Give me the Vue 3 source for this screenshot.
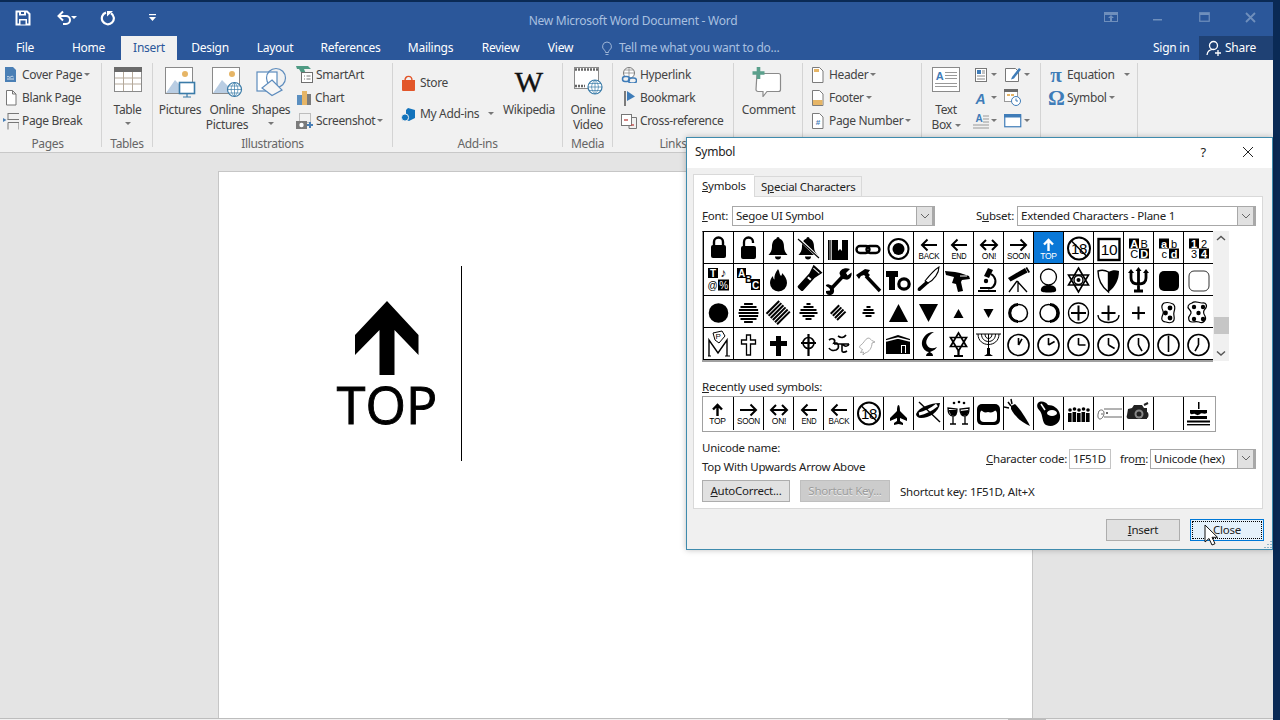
<script setup>
import { h } from 'vue'

const B = '#4a7fb5', G = '#7b7b7b', O = '#e6b566'
const ICONS = {
  save: `<path d="M1.5 1.5h10.5l2.5 2.5v10.5h-13z" fill="none" stroke="#fff" stroke-width="2"/><rect x="4" y="1" width="7" height="4.5" fill="#fff"/><rect x="6" y="2" width="3" height="2" fill="#2b579a"/><rect x="4" y="9" width="8" height="5.5" fill="#fff"/><rect x="5.5" y="10.5" width="5" height="4" fill="#2b579a"/>`,
  undo: `<path d="M3 6h7a4 4 0 0 1 0 8H7" fill="none" stroke="#fff" stroke-width="2"/><path d="M7 1.5L2.5 6 7 10.5" fill="none" stroke="#fff" stroke-width="2"/>`,
  redo: `<path d="M6 2.6a6 6 0 1 0 5 .6" fill="none" stroke="#fff" stroke-width="2.2"/><path d="M13 1H7v5.5z" fill="#fff"/>`,
  custom: `<rect x="1" y="1" width="7" height="1.2" fill="#fff"/><path d="M1 4h7L4.5 8z" fill="#fff"/>`,
  ribbonDisp: `<rect x=".5" y=".5" width="13" height="9" fill="none" stroke="#6f8fbc"/><rect x="1" y="1" width="12" height="2" fill="#6f8fbc"/><path d="M7 3l3 3H8v3H6V6H4z" fill="#6f8fbc"/>`,
  min: `<rect x="1" y="7" width="9" height="1.5" fill="#6f8fbc"/>`,
  max: `<rect x=".75" y=".75" width="9.5" height="8.5" fill="none" stroke="#6f8fbc" stroke-width="1.2"/><rect x="1" y="1" width="9" height="2" fill="#6f8fbc"/>`,
  close: `<path d="M1 1l9 9M10 1l-9 9" stroke="#6f8fbc" stroke-width="1.8"/>`,
  bulb: `<path d="M6 1a4.5 4.5 0 0 0-2.5 8.2c.8.6 1 1.3 1 2.3h3c0-1 .2-1.7 1-2.3A4.5 4.5 0 0 0 6 1zM4.5 13.5h3" fill="none" stroke="#9db5d7"/>`,
  share: `<circle cx="7.5" cy="5.5" r="4" fill="none" stroke="#fff" stroke-width="1.3"/><path d="M1 15c.5-4 3-5.6 6.5-5.6M12 10v6M9 13h6" fill="none" stroke="#fff" stroke-width="1.3"/>`,
  cover: `<path d="M2 1h8l3 3v12H2z" fill="${B}"/><path d="M4 11c1.5-1.6 2 1 3.5 0s2-1 3 0M4 13h7" stroke="#fff" fill="none" stroke-width=".8"/>`,
  blank: `<path d="M3.5 1.5h6l3.5 3.5v11H3.5zM9.5 1.5V5H13" fill="#fff" stroke="#777"/>`,
  pbreak: `<path d="M5 1v6.5M5 1.5h11M4.5 7.5H16M5 10.5h11v7M5 10.5v7" fill="none" stroke="#777"/><path d="M0 6l3.5 2L0 10z" fill="${B}"/>`,
  table: `<rect x=".5" y=".5" width="27" height="24" fill="#fff" stroke="#8a8a8a"/><rect x="0" y="0" width="28" height="5" fill="#6a6a6a"/><path d="M1 11h26M1 17h26M9.5 5v19M18.5 5v19" stroke="#b5a99a"/>`,
  pictures: `<rect x=".5" y=".5" width="27" height="26" fill="#fff" stroke="#8a8a8a"/><circle cx="20" cy="7" r="3" fill="${O}"/><path d="M1 26L10 13l7 7 4-2 6 7v1z" fill="#b9cde3"/><rect x="14.5" y="15.5" width="15" height="11" fill="#fff" stroke="#3a7ba8" stroke-width="1.6"/><path d="M22 27v2.5M18 30h8" stroke="#3a7ba8" stroke-width="1.2"/>`,
  online: `<rect x=".5" y=".5" width="27" height="26" fill="#fff" stroke="#8a8a8a"/><circle cx="20" cy="7" r="3" fill="${O}"/><path d="M1 26L10 13l7 7 4-2 6 7v1z" fill="#b9cde3"/><circle cx="22.5" cy="22.5" r="7" fill="#fff" stroke="#3a7ba8" stroke-width="1.2"/><path d="M15.5 22.5h14M16.5 19h12M16.5 26h12M22.5 15.5v14M22.5 15.5c-4.5 4-4.5 10 0 14M22.5 15.5c4.5 4 4.5 10 0 14" fill="none" stroke="#3a7ba8" stroke-width=".7"/>`,
  shapes: `<rect x="1" y="5" width="20" height="19" fill="#fff" stroke="#5d8cbd" stroke-width="1.2"/><circle cx="20" cy="11" r="9.5" fill="none" stroke="#5d8cbd" stroke-width="1.2"/><path d="M16 14l10 10-10 5.5L6 22z" transform="translate(0 -1)" fill="#f6f6f6" stroke="#5d8cbd" stroke-width="1.2"/>`,
  smartart: `<path d="M0 0h12l3 3h-7l2 5H6L3 3H1z" fill="#4f9a83"/><rect x="5.5" y="6.5" width="11" height="10" fill="#fff" stroke="#6f6f6f"/><path d="M8 10h1M8 13h1M10.5 10h4M10.5 13h4" stroke="#777"/>`,
  chart: `<rect x="1" y="5" width="5" height="10" fill="#5b8fc0"/><rect x="6" y="1" width="5" height="14" fill="${O}"/><rect x="11" y="4" width="4" height="11" fill="${G}"/>`,
  screenshot: `<rect x="3.5" y="1.5" width="11" height="9" fill="none" stroke="#888" stroke-dasharray="1 1"/><rect x="0" y="9" width="11" height="8" fill="${G}"/><circle cx="5.5" cy="13" r="2.2" fill="#fff"/><path d="M14 10v6M11 13h6" stroke="${B}" stroke-width="2"/>`,
  store: `<path d="M1 5h13v10a1 1 0 0 1-1 1H2a1 1 0 0 1-1-1z" fill="#e2562a"/><path d="M4 5.5c0-5.5 7-5.5 7 0" stroke="#e2562a" fill="none" stroke-width="1.4"/>`,
  addins: `<path d="M7 2l7 2v8l-6 3-3-1V4z" fill="#1273bc"/><circle cx="4" cy="11.5" r="3.6" fill="#1273bc" stroke="#f1f1f1"/>`,
  video: `<rect x=".5" y=".5" width="24" height="21" fill="#fff" stroke="#8a8a8a"/><path d="M1 2.5h23M1 19h10" stroke="#666" stroke-width="2.4" stroke-dasharray="2 1"/><circle cx="21" cy="20" r="7" fill="#fff" stroke="#3a7ba8" stroke-width="1.2"/><path d="M14 20h14M15 16.5h12M15 23.5h12M21 13v14M21 13c-4.5 4-4.5 10 0 14M21 13c4.5 4 4.5 10 0 14" fill="none" stroke="#3a7ba8" stroke-width=".7"/>`,
  hyperlink: `<circle cx="8" cy="6" r="5.5" fill="#fff" stroke="${G}"/><path d="M2.5 6h11M3.5 3h9M8 .5v11" stroke="${G}" stroke-width=".7"/><rect x="1.5" y="9.5" width="7" height="5" rx="2.5" fill="#f1f1f1" stroke="#3f7cb8" stroke-width="1.5"/><rect x="7.5" y="11" width="8" height="5" rx="2.5" fill="none" stroke="#3f7cb8" stroke-width="1.5"/>`,
  bookmark: `<rect x="3" y="1" width="2" height="15" fill="${G}"/><path d="M6 1l8 5.5L6 11z" fill="#3f7cb8"/>`,
  xref: `<rect x=".5" y="1.5" width="10" height="11" fill="#fff" stroke="#777"/><path d="M3 7h4" stroke="#c0504d" stroke-width="1.4"/><path d="M11 4.5h4.5v11H8V13" fill="none" stroke="#777"/><path d="M10 12h3" stroke="#c0504d" stroke-width="1.4"/>`,
  comment: `<path d="M5 6.5h21.5a2 2 0 0 1 2 2v14a2 2 0 0 1-2 2H15l-4 5v-5H6a2 2 0 0 1-2-2z" fill="#fff" stroke="#8a8a8a" stroke-width="1.2"/><path d="M6.5 0v12M0.5 6h12" stroke="#5ba08c" stroke-width="3.6"/>`,
  header: `<path d="M2.5 1.5h7l3.5 3.5v11.5H2.5z" fill="#fff" stroke="#7b7b7b"/><rect x="4" y="3" width="5" height="3" fill="${O}"/>`,
  footer: `<path d="M2.5 1.5h7l3.5 3.5v11.5H2.5z" fill="#fff" stroke="#7b7b7b"/><rect x="3" y="11" width="9.5" height="5" fill="${O}"/>`,
  pnum: `<path d="M2.5 1.5h7l3.5 3.5v11.5H2.5z" fill="#fff" stroke="#7b7b7b"/><text x="7.7" y="13" font-size="8" font-weight="700" text-anchor="middle" fill="#3f7cb8" font-family="Liberation Sans,sans-serif">#</text>`,
  textbox: `<rect x=".5" y=".5" width="27" height="24" fill="#fff" stroke="#8a8a8a"/><text x="7.5" y="13" font-size="11" font-weight="700" text-anchor="middle" fill="#3f7cb8" font-family="Liberation Sans,sans-serif">A</text><path d="M13 5.5h12M13 8.5h12M13 11.5h12M3 16.5h22M3 19.5h22" stroke="#999"/>`,
  qparts: `<rect x="2.5" y="1.5" width="11" height="13" fill="#fff" stroke="#777"/><rect x="4" y="3" width="4" height="4" fill="#3f7cb8"/><path d="M9 4h3M9 6h3M4 9h8M4 12h8" stroke="#888"/>`,
  wordart: `<text x="7.5" y="14" font-size="14" font-style="italic" font-weight="700" text-anchor="middle" fill="#3f7cb8" font-family="Liberation Sans,sans-serif">A</text>`,
  dropcap: `<text x="6" y="9" font-size="10" font-weight="700" text-anchor="middle" fill="#3f7cb8" font-family="Liberation Sans,sans-serif">A</text><path d="M10 3h6M10 6h6M10 9h6M0 12h16M0 15h16" stroke="#999"/>`,
  sign: `<path d="M1.5 2.5h10l3 3v10h-13z" fill="#fff" stroke="#777"/><path d="M8 11l7-9 2 1.5-7 9-3 1z" fill="#3f7cb8"/>`,
  date: `<rect x=".5" y=".5" width="13" height="12" fill="#fff" stroke="#999"/><rect x="0" y="0" width="14" height="3" fill="#6a6a6a"/><rect x="3" y="5" width="3" height="2" fill="${O}"/><rect x="7" y="5" width="3" height="2" fill="${O}"/><circle cx="12" cy="12" r="4.5" fill="#fff" stroke="#3f7cb8"/><path d="M12 9.5V12h2" fill="none" stroke="#3f7cb8"/>`,
  object: `<rect x=".75" y=".75" width="16" height="12" fill="#fff" stroke="#3f7cb8" stroke-width="1.2"/><rect x="0" y="0" width="17" height="3.5" fill="#3f7cb8"/>`,
  dlgX: `<path d="M1 1l10 10M11 1L1 11" stroke="#222" stroke-width="1"/>`,
  grip: `<path d="M8 1v1M5 4v1M8 4v1M2 7v1M5 7v1M8 7v1" stroke="#8fb3c6" stroke-width="2"/>`,
  cursor: `<path d="M1 1v17l4-3.5 3 6.5 3-1.3-3-6.4h5.5z" fill="#fff" stroke="#111" stroke-width="1"/>`,
  bigArrow: `<path d="M32 0L63.5 34v20L39.500 29v45H24.500V29L0 54V34z" fill="#000"/>`,
  upChev: `<path d="M1 5l4-3.5L9 5" fill="none" stroke="#555" stroke-width="1.4"/>`,
  downChev: `<path d="M1 1.5L5 5l4-3.5" fill="none" stroke="#555" stroke-width="1.4"/>`,
  comboChev: `<path d="M1 1l4 4 4-4" fill="none" stroke="#666"/>`
}
const Ico = (p) => h('svg', { width: p.w, height: p.h || p.w, viewBox: `0 0 ${p.w} ${p.h || p.w}`, innerHTML: ICONS[p.n] })
Ico.props = ['n', 'w', 'h']

const tabs = ['File', 'Home', 'Insert', 'Design', 'Layout', 'References', 'Mailings', 'Review', 'View']

const F = 'Liberation Sans,sans-serif'
const T = (x, y, s, str, c = '#000', extra = '') => `<text x="${x}" y="${y}" font-size="${s}" font-family="${F}" text-anchor="middle" fill="${c}" ${extra}>${str}</text>`
const stroke = (d, w = 2, c = '#000') => `<path d="${d}" fill="none" stroke="${c}" stroke-width="${w}"/>`
const left = (label) => stroke('M24 13H9M14.5 7.5L9 13l5.5 5.5') + T(16, 27, 8.5, label, '#000', 'textLength="' + (label.length > 3 ? 21 : 15) + '" lengthAdjust="spacingAndGlyphs"')
const soon = stroke('M7 13h16M17.5 7.5L23 13l-5.5 5.5') + T(15.5, 27, 8.5, 'SOON', '#000', 'textLength="23" lengthAdjust="spacingAndGlyphs"')
const on = stroke('M8 13h16M13 8l-5 5 5 5M19 8l5 5-5 5') + T(16, 27, 8.5, 'ON!')
const top = (c) => stroke('M15.5 19V8M11 12.500l4.5-4.5 4.5 4.500', 2.4, c) + T(15.5, 27, 8.5, 'TOP', c)
const no18 = `<circle cx="16" cy="16.5" r="11" fill="none" stroke="#000" stroke-width="2"/>` + T(16, 22, 15, '18', '#000') + stroke('M8.5 9l15 15', 1.5)
const ten = `<rect x="5.5" y="7" width="21" height="21" fill="none" stroke="#000" stroke-width="2.4"/>` + T(16, 23, 15.5, '10')
const quad = (a, b, c, d) => `<rect x="6" y="6.5" width="10" height="10" fill="#000"/><rect x="16" y="16.5" width="10" height="10"/>` +
  T(11, 15.5, 11, a, '#fff', 'font-weight="700"') + T(21, 15.5, 11, b) + T(11, 25.5, 11, c) + T(21, 25.5, 11, d, '#fff', 'font-weight="700"')
const clock = (n) => {
  const a = (n * 30 - 90) * Math.PI / 180
  return `<circle cx="15.5" cy="17" r="10.5" fill="none" stroke="#000" stroke-width="1.6"/>` +
    stroke(`M15.5 17V${n === 6 ? 7.5 : 10}M15.5 17L${(15.5 + 7 * Math.cos(a)).toFixed(1)} ${(17 + 7 * Math.sin(a)).toFixed(1)}`, 1.6)
}
const hCircle = (r) => { let s = ''; for (let y = -r + 1; y < r; y += 3) s += `<rect x="${(15.5 - Math.sqrt(r * r - y * y)).toFixed(1)}" y="${16 + y}" width="${(2 * Math.sqrt(r * r - y * y)).toFixed(1)}" height="2"/>`; return s }
const hDiamond = (r) => { let s = ''; for (let y = -r + 1; y < r; y += 3) { const w = r - Math.abs(y + 1); s += `<rect x="${15.5 - w}" y="${16 + y}" width="${2 * w}" height="2"/>` } return s }
const dDiamond = (n) => { let s = `<g transform="rotate(45 15.5 17)">`; for (let i = 0; i < n; i++) s += `<rect x="${15.5 - n * 1.5 + i * 3}" y="${17 - n * 1.5}" width="2" height="${n * 3}"/>`; return s + '</g>' }
const bell = `<path d="M15 5c-1 0-1.5.8-1.5 1.500C9.500 8 9 12 9 15c0 3-1.500 6-3.500 8h19c-2-2-3.500-5-3.500-8 0-3-.5-7-4.500-8.500C16.500 5.800 16 5 15 5zM12 24.500h6a3 3 0 0 1-6 0z"/>`

const rows = [
  `<rect x="8" y="13" width="15" height="13" rx="2"/>` + stroke('M11 14v-4a4.5 4.5 0 0 1 9 0v4', 2.4),
  `<rect x="8" y="14" width="15" height="13" rx="2"/>` + stroke('M11 15v-5a4.5 4.5 0 0 1 9 0v1', 2.3),
  bell,
  bell + stroke('M5 6l21 20', 2.6, '#fff') + stroke('M5 7l21 19', 1.2),
  `<rect x="5" y="8" width="20" height="20"/><path d="M7 8v20M8.5 8v20" stroke="#fff" stroke-width=".7"/><path d="M15 8h4v11l-2-2-2 2z" fill="#fff"/>`,
  `<rect x="3.5" y="14" width="13" height="7" rx="3.5" fill="none" stroke="#000" stroke-width="2.4"/><rect x="13.5" y="14" width="13" height="7" rx="3.5" fill="none" stroke="#000" stroke-width="2.4"/>`,
  `<circle cx="15.5" cy="17" r="10" fill="none" stroke="#000" stroke-width="2"/><circle cx="15.5" cy="17" r="6"/>`,
  left('BACK'), left('END'), on, soon, top('#fff'), no18, ten,
  quad('A', 'B', 'C', 'D'), quad('a', 'b', 'c', 'd'), quad('1', '2', '3', '4'),

  `<rect x="5" y="4" width="10" height="10"/>` + T(10, 13, 10, 'T', '#fff', 'font-weight="700"') + T(20, 13, 12, '♪') + T(9.5, 25, 10, '@') + `<rect x="15" y="15.5" width="11" height="11"/>` + T(20.5, 25, 10, '%', '#fff'),
  `<rect x="4" y="4" width="9" height="10"/>` + T(8.5, 13, 10, 'A', '#fff', 'font-weight="700"') + T(15.5, 19, 10, 'B', '#000', 'font-weight="700"') + `<rect x="18" y="15" width="9" height="11"/>` + T(22.5, 25, 10, 'C', '#fff', 'font-weight="700"'),
  `<path d="M15 5c2 3 1 5 3 7 1-1 1-2 1-3 3 3 5 6 5 10a8.500 8.500 0 0 1-17 0c0-3 1-5 3-7 0 2 .5 3 1.500 3.500C11 11 13 8 15 5z"/>`,
  `<g transform="rotate(42 15 16)"><path d="M9 1h12l-2.5 9v17a1.5 1.5 0 0 1-1.5 1.5h-4A1.5 1.5 0 0 1 11.5 27V10z"/><rect x="11" y="3" width="8" height="1" fill="#fff"/><rect x="13" y="13" width="4" height="2" fill="#fff"/></g>`,
  stroke('M7.5 25.5l15-16', 3.6) + `<path d="M27 5l-4 4 1.5 2.5 4-3c.7 4-2 8-6 7l-4-1-2-5c.5-4 5-6.5 10.5-4.5zM3 22l4 2.5 0 2-4 .5c-.5 2 1 4 3.5 4 3 0 5-2 4.5-5l-1-4-4-1.5C4 20 2.5 21 3 22z"/>`,
  `<path d="M3 11l9-6 5 1-2 3 2 2-3 3-3-3-3 1-2 3z"/>` + stroke('M13 12l14 15', 3.4),
  `<path d="M3 7h12v6h-3v13H6V13H3z"/><circle cx="21" cy="20" r="5.2" fill="none" stroke="#000" stroke-width="3.2"/>`,
  `<path d="M26 3c0 6-5 13-11 16l-3-2C16 12 21 6 26 3z" fill="#fff" stroke="#000" stroke-width="1.1"/><path d="M13 17l3 2-9 8c-2 .5-3-1-2-3z"/>`,
  `<path d="M2 7l10 1 5 1 9 3 1 3-8 1-1 2 2 9-5 1-2-8-4-1 2-6-8-2z"/><path d="M17 12h7" stroke="#fff" stroke-width="1"/>`,
  stroke('M5 27h18M7 24h10', 2) + stroke('M18 10c5 3 6 9 2 13-1.500 1.500-3 1.500-5 1.500', 2) + `<path d="M15 4l5 2-4 8-5-2z"/><circle cx="13" cy="17" r="2.200"/>`,
  `<path d="M5 14l17-10 2.500 4.500-17 9z"/><path d="M24 3l3 5-1.500 1-3-5z"/><path d="M6 28l8-11M15 28v-11M24 28l-10-11" stroke="#000" stroke-width="1.300" fill="none"/>`,
  `<circle cx="15.500" cy="13" r="8" fill="none" stroke="#000" stroke-width="1.300"/><path d="M8 27c-1-4 3-6 7.500-6s8.500 2 7.500 6c-1 2-14 2-15 0z"/>`,
  `<path d="M15.5 4l10 17h-20zM15.5 28l-10-17h20z" fill="none" stroke="#000" stroke-width="1.6"/><circle cx="15.5" cy="16" r="4.5" fill="none" stroke="#000" stroke-width="1.4"/><circle cx="15.5" cy="16" r="2"/>`,
  `<path d="M15.500 8C12 6 8 6 5 7c0 9 4 16 10.500 21z" fill="none" stroke="#000" stroke-width="1.4"/><path d="M15.500 8c3.500-2 7.500-2 10.500-1 0 9-4 16-10.500 21z"/>`,
  stroke('M15.5 5v22M8 8v6c0 4 3 6 7.5 6s7.5-2 7.5-6V8M11 27h9', 2.8) + `<path d="M15.5 3l3 4h-6zM8 5l3 4H5zM23 5l3 4h-6z"/>`,
  `<rect x="6" y="7" width="20" height="20" rx="5"/>`,
  `<rect x="6" y="7" width="20" height="20" rx="5" fill="none" stroke="#333" stroke-width="1"/>`,

  `<circle cx="15.5" cy="17" r="9.8"/>`, hCircle(10), dDiamond(6), hDiamond(10), dDiamond(4), hDiamond(7),
  `<path d="M15.5 8l9.5 18H6z"/>`, `<path d="M6 8h19l-9.5 18z"/>`, `<path d="M15.5 13l5 9h-10z"/>`, `<path d="M10.5 13h10l-5 9z"/>`,
  `<circle cx="16" cy="17" r="8.5" fill="none" stroke="#000" stroke-width="1.5"/>` + stroke('M15 8.5a8.5 8.5 0 0 0 0 17', 2.8),
  `<circle cx="15.5" cy="17" r="8.5" fill="none" stroke="#000" stroke-width="1.5"/>` + stroke('M17 8.5a8.5 8.5 0 0 1 0 17', 2.8),
  `<circle cx="15.5" cy="17" r="10" fill="none" stroke="#000" stroke-width="1.3"/>` + stroke('M15.5 9.5v15M8 17h15', 2),
  stroke('M15.5 9.5v15M8.5 17h14', 2) + stroke('M5 19c0 10 21 10 21 0', 1.3),
  stroke('M15.5 10.5v13M9 17h13', 2),
  stroke('M11 7c3-1 7 0 9 1 3 2 2 5 1 8-1 3 1 5 0 8s-5 3-8 2c-3 0-5-2-4-5s2-4 1-6-2-6 1-8z', 1.2) + `<circle cx="17" cy="12" r="2.400"/><circle cx="17" cy="22" r="2.400"/><circle cx="12.5" cy="17" r="2.400"/>`,
  stroke('M9 7c3-3 6 0 10 0 4-1 6 3 3 6-2 2-2 4 0 7 2 4-2 8-6 6-3-1-5 0-7 0-4 0-4-5-2-7s1-4-1-6-1-5 3-6z', 1.2) + `<circle cx="11" cy="11" r="2.2"/><circle cx="20" cy="11" r="2.2"/><circle cx="15.5" cy="17" r="2.2"/><circle cx="11" cy="23" r="2.2"/><circle cx="20" cy="23" r="2.2"/>`,

  stroke('M6 28V12l9 13 9-13v16', 1.4) + stroke('M8 28h-3M22 28h5', 1.2) + stroke('M10 5l9-2 3 5-6 7-4-3z', 1) + T(15, 11, 8, 'P'),
  `<path d="M13.5 7h4v5h5v4h-5v11h-4V16h-5v-4h5z" fill="none" stroke="#000" stroke-width="1.3"/>`,
  `<path d="M13 8h5v5h6v5h-6v10h-5V18H7v-5h6z"/>`,
  `<circle cx="15.5" cy="15" r="5.5" fill="none" stroke="#000" stroke-width="1.6"/>` + stroke('M15.5 6v22M8 15h15', 2.2),
  stroke('M6 12c4-3 7 0 5 3 5-1 6 5 2 7-3 1-6 0-7-2M11 16h15M19 16v7c0 1 2 2 5 0M20 16c1 3 5 3 6 0M15 8c3 2 6 2 8-1', 1.6),
  stroke('M8 17c3-2 4-6 7-7 3 0 3 3 5 3l2 1-3 1c0 5-3 9-7 10l-2 2 .5-3-3 .5 2-3C6 20 6 18 8 17z', .8, '#999'),
  `<path d="M3 11l12-4 12 4v15H3z"/><path d="M3 13l12-3 12 3" fill="none" stroke="#fff" stroke-width="1.3"/><rect x="18" y="17" width="5" height="8" fill="#fff"/><rect x="19" y="18" width="3" height="7"/>`,
  `<path d="M21 4C12 4 8 12 9 17c1 4 4 7 7 7-1 1-3 1.500-3 4h7c0-3-2-3-3-4 3-1 6-3 7-5-4 2-8 2-10-2-2-3 0-9 7-13z"/>`,
  `<path d="M15.5 5l8 13.500h-16zM15.500 23l-8-13.500h16z" fill="none" stroke="#000" stroke-width="1.7"/>` + stroke('M15.5 23v5M11 28h9', 2.2),
  stroke('M15.5 6v18M5 6c0 14 21 14 21 0M8.500 6c0 10 14 10 14 0M12 6c0 6 7 6 7 0M3 6h25', 1) + `<path d="M14 20h3v6l3 2H11l3-2z"/>`,
  clock(1), clock(2), clock(3), clock(4), clock(5), clock(6), clock(7)
]
const recent = [
  top('#000'), soon, on, left('END'), left('BACK'), no18,
  `<path d="M15.500 8c1 0 1.500 3 1.500 6l7 7v3l-7-3 0 3 3 2v2l-4.500-1-4.500 1v-2l3-2v-3l-7 3v-3l7-7c0-3 .5-6 1.500-6z"/>`,
  `<path d="M3 17C6 10 18 6 27 6c-1 9-11 15-19 15-3 0-5-2-5-4z" /><path d="M6 17c5-1 13-5 18-9" stroke="#fff" stroke-width="3" fill="none"/><path d="M6 5l21 20" stroke="#000" stroke-width="1.4"/>`,
  stroke('M5 11c0 6 2 8 5 8s4-2 4-7zM17 12c0 6 2 7 5 7s4-3 4-8zM10 19v8M22 19v8M7 27h6M19 27h6', 1.3) + `<path d="M5.500 13h8.500l-1 5H8zM17.500 14l8-1-1 5h-6z"/><circle cx="11" cy="6" r="1.300"/><circle cx="16" cy="5" r="1.300"/><circle cx="21" cy="6" r="1.300"/>`,
  `<rect x="4" y="7" width="23" height="21" rx="5"/><rect x="7" y="13" width="17" height="12" rx="4" fill="#fff"/><path d="M8 12c3-2 5 1 7 1s4-3 8-1c-1 3-5 4-8 3-3 1-6 0-7-3z"/>`,
  `<path d="M8 9l4-2c4 4 10 12 15 22-7-3-15-9-19-17z"/><path d="M8 9L5 5M9 7l-1-5M6 11l-5-1" stroke="#000" stroke-width="1.5"/>`,
  `<path d="M5 6c3-3 8-1 10 2 5 0 11 3 12 10 1 8-6 13-14 10-4-2-3-10-6-14-2-2-4-5-2-8z"/><ellipse cx="19" cy="16" rx="5" ry="3" fill="#fff"/><path d="M8 7l4 6" stroke="#fff" stroke-width="1.5"/>`,
  `<g fill="#000"><circle cx="7" cy="13" r="1.800"/><rect x="5" y="16" width="3.600" height="9"/><circle cx="11.500" cy="12" r="1.800"/><rect x="9.500" y="15" width="3.600" height="10"/><circle cx="16" cy="13" r="1.800"/><rect x="14" y="16" width="3.600" height="9"/><circle cx="20.500" cy="12" r="1.800"/><rect x="18.500" y="15" width="3.600" height="10"/><circle cx="25" cy="13" r="1.800"/><rect x="23" y="16" width="3.600" height="9"/></g>`,
  stroke('M6 14c2-2 5-1 5 2s-2 6-4 6-3-3-1-8zM11 12h18M11 20h18M8 17h2', .9, '#555') + `<circle cx="14" cy="16" r="1" fill="#333"/>`,
  `<path d="M5 12l4-1 2-3h8l2 3h3v4c2 0 2 6 0 6v1H6c-2 0-3-2-2-4z" fill="#222"/><circle cx="16" cy="17" r="4.500" fill="#888"/><circle cx="16" cy="17" r="2.500" fill="#222"/><path d="M21 8l4-2" stroke="#222" stroke-width="2"/>`,
  '',
  `<rect x="15" y="5" width="1.500" height="7"/><rect x="7" y="13" width="17" height="9"/><path d="M7 16c2 3 3 0 5 1s3 2 5 0 4 1 7-1v3H7z" fill="#fff"/><rect x="4" y="23.500" width="23" height="2"/><rect x="4" y="27" width="23" height="1.400"/>`
]
</script>

<template>
  <div class="desk">
    <div class="win">
      <div class="titlebar">
        <div class="qat">
          <Ico class="q-save" n="save" w="16" />
          <Ico class="q-undo" n="undo" w="16" />
          <i class="caret white q-c1"></i>
          <Ico class="q-redo" n="redo" w="16" />
          <Ico class="q-cust" n="custom" w="9" />
        </div>
        <div class="doc-title">New Microsoft Word Document - Word</div>
        <div class="wctl">
          <Ico n="ribbonDisp" w="14" h="10" />
          <Ico n="min" w="11" />
          <Ico n="max" w="11" h="10" />
          <Ico n="close" w="11" />
        </div>
      </div>

      <div class="tabrow">
        <div class="tabs">
          <div v-for="t in tabs" :key="t" class="tab" :class="{ active: t === 'Insert', file: t === 'File' }">{{ t }}</div>
        </div>
        <div class="tell"><Ico n="bulb" w="12" h="15" /><span>Tell me what you want to do...</span></div>
        <div class="signin">Sign in</div>
        <div class="share"><Ico n="share" w="16" /><span>Share</span></div>
      </div>

      <div class="ribbon">
        <section class="group g-pages">
          <div class="body"><div class="stack">
            <div class="sm"><Ico n="cover" w="16" h="18" /><span>Cover Page</span><i class="caret"></i></div>
            <div class="sm"><Ico n="blank" w="16" h="18" /><span>Blank Page</span></div>
            <div class="sm"><Ico n="pbreak" w="16" h="18" /><span>Page Break</span></div>
          </div></div>
          <div class="glabel lab-pages">Pages</div>
        </section>
        <section class="group g-tables">
          <div class="body"><div class="big w51">
            <div class="bigicon"><Ico n="table" w="28" h="25" /></div><span>Table</span><i class="caret mid"></i>
          </div></div>
          <div class="glabel">Tables</div>
        </section>
        <section class="group g-ill">
          <div class="body">
            <div class="big w54"><div class="bigicon"><Ico n="pictures" w="31" /></div><span>Pictures</span></div>
            <div class="big w40"><div class="bigicon"><Ico n="online" w="31" /></div><span>Online<br>Pictures</span></div>
            <div class="big w48"><div class="bigicon"><Ico n="shapes" w="31" /></div><span>Shapes</span><i class="caret mid"></i></div>
            <div class="stack pl1">
              <div class="sm"><Ico n="smartart" w="17" /><span>SmartArt</span></div>
              <div class="sm"><Ico n="chart" w="16" /><span>Chart</span></div>
              <div class="sm"><Ico n="screenshot" w="17" /><span>Screenshot</span><i class="caret"></i></div>
            </div>
          </div>
          <div class="glabel">Illustrations</div>
        </section>
        <section class="group g-add">
          <div class="body">
            <div class="stack tall">
              <div class="sm"><Ico n="store" w="16" /><span>Store</span></div>
              <div class="sm"><Ico n="addins" w="16" /><span>My Add-ins</span><i class="caret far"></i></div>
            </div>
            <div class="big w40">
              <div class="bigicon"><span class="wiki">W</span></div><span>Wikipedia</span>
            </div>
          </div>
          <div class="glabel">Add-ins</div>
        </section>
        <section class="group g-media">
          <div class="body"><div class="big w50">
            <div class="bigicon"><Ico n="video" w="29" /></div><span>Online<br>Video</span>
          </div></div>
          <div class="glabel">Media</div>
        </section>
        <section class="group g-links">
          <div class="body"><div class="stack">
            <div class="sm"><Ico n="hyperlink" w="16" /><span>Hyperlink</span></div>
            <div class="sm"><Ico n="bookmark" w="16" /><span>Bookmark</span></div>
            <div class="sm"><Ico n="xref" w="16" /><span>Cross-reference</span></div>
          </div></div>
          <div class="glabel">Links</div>
        </section>
        <section class="group g-comment">
          <div class="body"><div class="big w69">
            <div class="bigicon"><Ico n="comment" w="34" h="30" /></div><span>Comment</span>
          </div></div>
        </section>
        <section class="group g-hf">
          <div class="body"><div class="stack">
            <div class="sm"><Ico n="header" w="16" h="18" /><span>Header</span><i class="caret"></i></div>
            <div class="sm"><Ico n="footer" w="16" h="18" /><span>Footer</span><i class="caret"></i></div>
            <div class="sm"><Ico n="pnum" w="16" h="18" /><span>Page Number</span><i class="caret"></i></div>
          </div></div>
        </section>
        <section class="group g-text">
          <div class="body">
            <div class="big w48">
              <div class="bigicon"><Ico n="textbox" w="28" h="25" /></div><span>Text<br>Box<i class="caret"></i></span>
            </div>
            <div class="stack col1">
              <div class="sm"><Ico n="qparts" w="16" /><i class="caret"></i></div>
              <div class="sm"><Ico n="wordart" w="16" /><i class="caret"></i></div>
              <div class="sm"><Ico n="dropcap" w="16" /><i class="caret"></i></div>
            </div>
            <div class="stack">
              <div class="sm"><Ico n="sign" w="18" /><i class="caret"></i></div>
              <div class="sm"><Ico n="date" w="18" /></div>
              <div class="sm"><Ico n="object" w="18" h="14" /><i class="caret"></i></div>
            </div>
          </div>
        </section>
        <section class="group g-sym">
          <div class="body"><div class="stack">
            <div class="sm"><b class="mathg">π</b><span>Equation</span><i class="caret far"></i></div>
            <div class="sm"><b class="mathg">Ω</b><span>Symbol</span><i class="caret"></i></div>
          </div></div>
        </section>
      </div>

      <div class="workspace">
        <div class="page">
          <div class="insert-sym">
            <Ico n="bigArrow" w="65" h="74" />
            <div class="top-word">TOP</div>
          </div>
          <div class="text-caret"></div>
        </div>
      </div>
      <div class="statusbar"><div class="thumb"></div></div>
    </div>

    <div class="dialog">
      <div class="dlg-title">
        <span class="dlg-name">Symbol</span>
        <span class="help">?</span>
        <Ico n="dlgX" w="12" />
      </div>
      <div class="dlg-tabs">
        <div class="dtab on"><u>S</u>ymbols</div>
        <div class="dtab">S<u>p</u>ecial Characters</div>
      </div>
      <div class="panel">
        <div class="row-font">
          <label class="lab-font"><u>F</u>ont:</label>
          <div class="combo c-font"><span>Segoe UI Symbol</span><div class="dd"><Ico n="comboChev" w="10" h="7" /></div></div>
          <label class="lab-sub">S<u>u</u>bset:</label>
          <div class="combo c-sub"><span>Extended Characters - Plane 1</span><div class="dd"><Ico n="comboChev" w="10" h="7" /></div></div>
        </div>
        <div class="gridwrap">
          <div class="grid">
            <div v-for="(g, i) in rows" :key="i" class="cell" :class="{ sel: i === 11 }">
              <svg width="30" height="32" viewBox="0 0 30 32" v-html="g"></svg>
            </div>
          </div>
          <div class="vscroll">
            <Ico n="upChev" w="10" h="7" />
            <div class="vthumb"></div>
            <Ico n="downChev" w="10" h="7" />
          </div>
        </div>
        <div class="rec-label"><u>R</u>ecently used symbols:</div>
        <div class="recent">
          <div v-for="(g, i) in recent" :key="i" class="rcell">
            <svg width="30" height="33" viewBox="0 0 30 33" v-html="g"></svg>
          </div>
        </div>
        <div class="info">
          <div class="names">
            <div>Unicode name:</div>
            <div class="uname">Top With Upwards Arrow Above</div>
          </div>
          <div class="code">
            <label class="lab-code"><u>C</u>haracter code:</label>
            <div class="codebox">1F51D</div>
            <label class="lab-from">fro<u>m</u>:</label>
            <div class="combo c-from"><span>Unicode (hex)</span><div class="dd"><Ico n="comboChev" w="10" h="7" /></div></div>
          </div>
        </div>
        <div class="row-btn">
          <div class="btn b-auto"><u>A</u>utoCorrect...</div>
          <div class="btn b-key">Shortcut Key...</div>
          <div class="sk">Shortcut key: 1F51D, Alt+X</div>
        </div>
      </div>
      <div class="dlg-foot">
        <div class="btn b-foot"><u>I</u>nsert</div>
        <div class="btn b-foot b-close"><span class="dots">Close</span></div>
      </div>
      <Ico class="grip" n="grip" w="9" />
    </div>
    <Ico class="mouse" n="cursor" w="15" h="23" />
  </div>
</template>

<style>
html, body { margin: 0; padding: 0; background: #0a2a55; }
</style>

<style scoped>
.desk { position: relative; width: 1280px; height: 720px; overflow: hidden; background: #0a2a55; font-family: "Noto Sans", "Open Sans", sans-serif; font-size: 12px; letter-spacing: -.25px; color: #444; }
svg { display: block; flex: none; }
.win { width: 1273px; height: 718px; margin-top: 2px; position: absolute; left: 0; top: 0; display: flex; flex-direction: column; background: #e4e4e4; }
.titlebar { height: 34px; background: #2b579a; display: flex; align-items: flex-start; flex: none; }
.qat { width: 400px; height: 34px; display: flex; align-items: center; padding-left: 15px; box-sizing: border-box; padding-bottom: 3px; }
.q-undo { margin-left: 25px; }
.q-c1 { margin-left: 8px; }
.q-redo { margin-left: 23px; }
.q-cust { margin-left: 32px; }
.doc-title { width: 466px; text-align: center; color: #a9c0e0; line-height: 38px; font-size: 12px; }
.wctl { display: flex; align-items: center; height: 30px; margin-left: 238px; gap: 0; }
.wctl svg:nth-child(1) { margin-right: 34px; }
.wctl svg:nth-child(2) { margin-right: 36px; }
.wctl svg:nth-child(3) { margin-right: 35px; }
.tabrow { height: 24px; background: #2b579a; display: flex; align-items: stretch; flex: none; color: #fff; line-height: 24px; }
.tabs { display: grid; grid-template-columns: 56px 65px 56px 66px 64px 87px 73px 67px 53px; }
.tab { text-align: center; color: #fff; }
.tab.file { padding-right: 6px; }
.tab.active { background: #f1f1f1; color: #2b579a; }
.tell { margin-left: 14px; display: flex; align-items: center; gap: 6px; color: #a9c0e0; width: 552px; }
.signin { width: 36px; text-align: left; white-space: nowrap; }
.share { margin-left: 10px; width: 74px; background: #1f4174; display: flex; align-items: center; padding-left: 7px; gap: 3px; box-sizing: border-box; }
.ribbon { height: 93px; background: #f1f1f1; border-bottom: 1px solid #c8c8c8; display: flex; flex: none; box-sizing: border-box; padding-top: 3px; letter-spacing: -.35px; }
.group { height: 84px; position: relative; box-sizing: border-box; border-right: 1px solid #d4d4d4; display: flex; flex-direction: column; flex: none; }
.body { height: 74px; display: flex; flex: none; }
.glabel { text-align: center; color: #666; line-height: 14px; }
.lab-pages { padding-right: 6px; }
.g-pages { width: 102px; }
.g-pages .stack { padding-left: 3px; }
.g-tables { width: 51px; }
.g-ill { width: 240px; }
.g-add { width: 170px; }
.g-add .stack { padding-left: 8px; width: 116px; box-sizing: border-box; }
.g-media { width: 50px; }
.g-links { width: 121px; }
.g-links .stack { padding-left: 8px; }
.g-comment { width: 69px; }
.g-hf { width: 119px; }
.g-hf .stack { padding-left: 7px; }
.g-text { width: 119px; }
.g-sym { width: 97px; }
.g-sym .stack { padding-left: 7px; }
.stack { display: flex; flex-direction: column; }
.stack.pl1 { padding-left: 1px; }
.stack.col1 { margin-left: 3px; width: 31px; }
.stack.tall { padding-top: 4px; }
.stack.tall .sm { height: 31px; }
.sm { height: 23px; display: flex; align-items: center; gap: 3px; white-space: nowrap; }
.caret { display: inline-block; width: 0; height: 0; border-left: 3px solid transparent; border-right: 3px solid transparent; border-top: 3px solid #777; margin-left: -1px; flex: none; vertical-align: middle; }
.caret.white { border-top-color: #fff; }
.caret.far { margin-left: 6px; }
.caret.mid { display: block; margin: 5px auto 0; }
.big .caret:not(.mid) { margin-left: 3px; }
.big { text-align: center; line-height: 15px; flex: none; }
.w40 { width: 40px; }
.w48 { width: 48px; }
.w50 { width: 50px; }
.w51 { width: 51px; }
.w54 { width: 54px; }
.w69 { width: 69px; }
.w40 span, .w54 span { white-space: nowrap; }
.w40 > span { display: block; margin: 0 -8px; }
.bigicon { height: 39px; display: flex; justify-content: center; align-items: flex-start; padding-top: 4px; box-sizing: border-box; }
.wiki { font-family: "Liberation Serif", serif; font-size: 30px; font-weight: 400; color: #111; line-height: 30px; letter-spacing: 0; -webkit-text-stroke: .4px #111; }
.mathg { font-family: "Liberation Serif", serif; width: 16px; font-size: 21px; color: #3f7cb8; letter-spacing: 0; line-height: 18px; text-align: center; }
.workspace { flex: 1; padding: 18px 0 0 218px; overflow: hidden; border-bottom: 1px solid #bdbdbd; }
.page { width: 815px; height: 600px; background: #fff; border: 1px solid #c6c6c6; box-sizing: border-box; display: flex; align-items: flex-start; padding: 94px 0 0 118px; }
.insert-sym { width: 100px; margin-top: 35px; display: flex; flex-direction: column; align-items: center; }
.top-word { font-family: "Open Sans", sans-serif; font-size: 52px; line-height: 50px; margin-top: 4px; color: #000; letter-spacing: 0; -webkit-text-stroke: .9px #000; }
.text-caret { width: 1px; height: 195px; background: #000; margin-left: 24px; flex: none; }
.statusbar { height: 1px; background: #f1f1f1; flex: none; }
.thumb { width: 38px; height: 3px; margin-left: 1008px; background: #bdbdbd; }

.dialog { position: absolute; left: 686px; top: 137px; width: 587px; height: 413px; box-sizing: border-box; background: #f0f0f0; border: 1px solid #3f8bad; box-shadow: 0 0 6px rgba(0,0,0,.25); color: #222; letter-spacing: -.25px; font-size: 11.5px; }
.dlg-title { height: 30px; background: #fff; display: flex; align-items: center; padding: 0 18px 3px 0; box-sizing: border-box; }
.dlg-name { margin-left: 8px; flex: 1; font-size: 12px; }
.help { margin-right: 36px; font-size: 13px; }
.dlg-tabs { display: flex; padding: 6px 0 0 6px; height: 28px; box-sizing: border-box; position: relative; z-index: 1; }
.dtab { height: 20px; margin-top: 2px; padding: 0 6px; line-height: 19px; background: #f0f0f0; border: 1px solid #d9d9d9; border-bottom: 0; box-sizing: border-box; width: 108px; white-space: nowrap; }
.dtab.on { height: 23px; margin-top: 0; background: #fff; width: 61px; border-right: 0; line-height: 22px; padding-left: 8px; }
.panel { width: 570px; height: 313px; margin: 0 0 0 6px; box-sizing: border-box; background: #fff; border: 1px solid #d9d9d9; padding: 9px 6px 0 8px; position: relative; }
.row-font { display: flex; align-items: center; height: 20px; line-height: 17px; }
.lab-font { width: 30px; padding-bottom: 2px; }
.lab-sub { margin-left: 41px; width: 41px; padding-bottom: 2px; }
.combo { height: 20px; box-sizing: border-box; border: 1px solid #a8a8a8; display: flex; align-items: center; padding-left: 3px; position: relative; white-space: nowrap; }
.combo > span { flex: 1; padding-bottom: 1px; }
.dd { height: 18px; background: #e1e1e1; border-left: 1px solid #a8a8a8; display: flex; align-items: center; justify-content: center; box-sizing: border-box; flex: none; border-right: 2px solid #a8a8a8; width: 18px; }
.c-font { width: 203px; }
.c-sub { width: 239px; }
.gridwrap { display: flex; margin-top: 5px; }
.grid { display: grid; grid-template-columns: repeat(17, 30px); border-top: 1px solid #000; border-left: 1px solid #a0a0a0; border-bottom: 2px solid #a0a0a0; }
.cell { width: 30px; height: 32px; box-sizing: border-box; border-left: 1px solid #000; border-bottom: 1px solid #000; overflow: hidden; }
.cell svg { margin-left: -1px; }
.cell.sel { background: #0a78d7; }
.vscroll { width: 16px; background: #f0f0f0; height: 130px; display: flex; flex-direction: column; align-items: center; padding-top: 4px; box-sizing: border-box; position: relative; }
.vthumb { width: 15px; height: 17px; background: #c6c6c6; margin-top: 75px; }
.vscroll svg:last-child { margin-top: 16px; }
.rec-label { margin-top: 17px; line-height: 15px; }
.recent { display: flex; width: 514px; height: 36px; margin-top: 2px; border: 1px solid #a0a0a0; box-sizing: border-box; }
.rcell { width: 30px; height: 33px; box-sizing: border-box; border-left: 1px solid #000; flex: none; overflow: hidden; }
.rcell:first-child { border-left: 0; }
.rcell svg { margin-left: -1px; }
.info { display: flex; justify-content: space-between; margin-top: 8px; height: 39px; line-height: 15px; }
.uname { margin-top: 4px; }
.code { display: flex; align-items: center; height: 21px; margin-top: 8px; }
.lab-code { margin-right: 3px; white-space: nowrap; width: 80px; }
.codebox { width: 42px; height: 20px; border: 1px solid #c4c4c4; box-sizing: border-box; padding-left: 3px; line-height: 17px; }
.lab-from { margin: 0 4px 0 9px; width: 26px; }
.c-from { width: 106px; }
.row-btn { display: flex; align-items: center; height: 22px; margin-top: 1px; }
.btn { height: 22px; box-sizing: border-box; border: 1px solid #adadad; background: #e1e1e1; text-align: center; line-height: 20px; white-space: nowrap; }
.b-auto { width: 88px; }
.b-key { width: 90px; margin-left: 10px; background: #ccc; border-color: #bfbfbf; color: #9c9c9c; text-shadow: 0 1px 0 #eee; }
.sk { margin-left: 10px; }
.dlg-foot { display: flex; justify-content: flex-end; gap: 10px; margin-top: 10px; width: 577px; }
.b-foot { width: 74px; }
.b-close { background: #e5f1fb; border-color: #0078d7; padding: 1px; line-height: 16px; }
.dots { display: block; height: 18px; border: 1px dotted #000; box-sizing: border-box; }
.grip { position: absolute; right: 0; bottom: 0; }
.mouse { position: absolute; left: 1204px; top: 524px; }
</style>
